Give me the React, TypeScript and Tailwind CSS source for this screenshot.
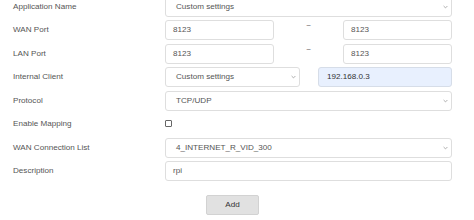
import type { ReactNode } from "react";

const fieldBase =
  "h-[20px] rounded-[3px] border border-[#dedede] bg-white text-[8.1px] text-[#555] flex items-center";

function Chevron() {
  return (
    <svg width="5" height="4" viewBox="0 0 5 4" className="absolute right-[3px] top-[7px]">
      <path d="M0.6 1 L2.5 2.9 L4.4 1" fill="none" stroke="#9a9a9a" strokeWidth="0.8" />
    </svg>
  );
}

function SelectBox({ value, className = "" }: { value: string; className?: string }) {
  return (
    <div className={`${fieldBase} relative pl-[10px] ${className}`}>
      <span>{value}</span>
      <Chevron />
    </div>
  );
}

function InputBox({ value, className = "" }: { value: string; className?: string }) {
  return <div className={`${fieldBase} pl-[7px] ${className}`}>{value}</div>;
}

function Row({ label, children }: { label: string; children: ReactNode }) {
  return (
    <div className="flex h-[23.5px] items-center">
      <div className="w-[165px] shrink-0 pl-[13px] text-[8.1px] text-[#555]">{label}</div>
      <div className="flex w-[287px] items-center">{children}</div>
    </div>
  );
}

export default function App() {
  return (
    <div
      className="h-[220px] w-[474px] overflow-hidden bg-white"
      style={{ fontFamily: '"Liberation Sans", Arial, sans-serif' }}
    >
      <div className="mt-[-5px]">
        <Row label="Application Name">
          <SelectBox value="Custom settings" className="w-full" />
        </Row>
        <Row label="WAN Port">
          <InputBox value="8123" className="w-[109px]" />
          <span className="flex-1 pb-[8px] text-center text-[8px] text-[#555]">~</span>
          <InputBox value="8123" className="w-[109px]" />
        </Row>
        <Row label="LAN Port">
          <InputBox value="8123" className="w-[109px]" />
          <span className="flex-1 pb-[8px] text-center text-[8px] text-[#555]">~</span>
          <InputBox value="8123" className="w-[109px]" />
        </Row>
        <Row label="Internal Client">
          <SelectBox value="Custom settings" className="w-[135px]" />
          <div className="ml-auto flex h-[20px] w-[134px] items-center rounded-[3px] border border-[#d6dde8] bg-[#e8f0fe] pl-[8px] text-[8.1px] text-[#333]">
            192.168.0.3
          </div>
        </Row>
        <Row label="Protocol">
          <SelectBox value="TCP/UDP" className="w-full" />
        </Row>
        <Row label="Enable Mapping">
          <span className="mb-[1px] block h-[7px] w-[7px] rounded-[1px] border border-[#666] bg-white" />
        </Row>
        <Row label="WAN Connection List">
          <SelectBox value="4_INTERNET_R_VID_300" className="w-full" />
        </Row>
        <Row label="Description">
          <InputBox value="rpi" className="w-full" />
        </Row>
      </div>
      <div className="mt-[7px] pl-[206px]">
        <button
          type="button"
          className="h-[20px] w-[53px] rounded-[2px] border border-[#d2d2d2] bg-[#e1e1e1] text-[8.1px] text-[#333]"
        >
          Add
        </button>
      </div>
    </div>
  );
}
